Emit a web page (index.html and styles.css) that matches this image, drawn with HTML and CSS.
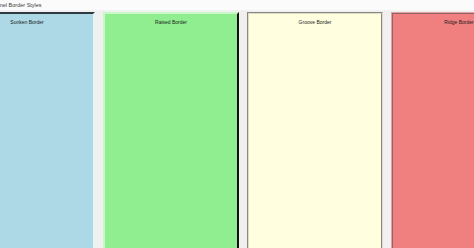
FILE: index.html
```html
<!DOCTYPE html>
<html lang="en">
<head>
  <meta charset="UTF-8">
  <title>Panel Border Styles</title>
  <link rel="stylesheet" href="styles.css">
</head>
<body>
  <div class="titlebar">Panel Border Styles</div>
  <div class="panels">
    <div class="panel sunken"><div class="label">Sunken Border</div></div>
    <div class="panel raised"><div class="label">Raised Border</div></div>
    <div class="panel groove"><div class="label">Groove Border</div></div>
    <div class="panel ridge"><div class="label">Ridge Border</div></div>
  </div>
</body>
</html>
```

FILE: styles.css
```css
html, body {
  margin: 0;
  height: 100%;
  overflow: hidden;
}

body {
  font-family: 'Segoe UI', 'Liberation Sans', sans-serif;
  background-color: #f0f0f0;
  color: #222;
}

.titlebar {
  height: 10px;
  background-color: #fbfbfb;
  border-bottom: 1px solid #f2f2f4;
  font-size: 5.5px;
  line-height: 10px;
  color: #3a3a3a;
  text-indent: -7px;
  white-space: nowrap;
}

.panels {
  display: flex;
  gap: 8px;
  margin-left: -41px;
  padding-top: 1px;
  height: 300px;
}

.panel {
  flex: 0 0 136px;
  box-sizing: border-box;
  border: 2px solid transparent;
}

.label {
  text-align: center;
  font-size: 5px;
  padding-top: 5px;
  color: #1a1a1a;
}

.sunken {
  background-color: #add8e6;
  border-color: #2e3a40 #e8f4f8 #e8f4f8 #2e3a40;
}

.raised {
  background-color: #90ee90;
  border-color: #c8f8c8 #101010 #101010 #c8f8c8;
}

.groove {
  background-color: #ffffe0;
  border-style: groove;
  border-color: #dcdccc;
}

.ridge {
  background-color: #f08080;
  border-style: ridge;
  border-color: #e4a0a0;
}
```
